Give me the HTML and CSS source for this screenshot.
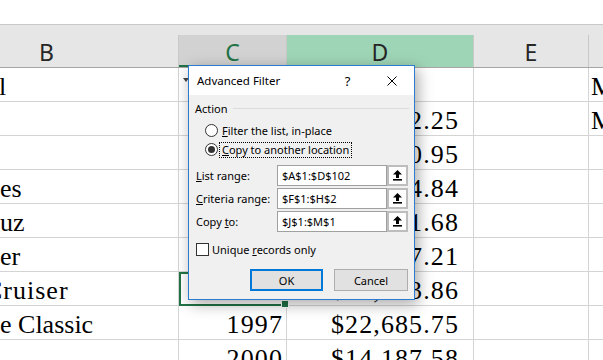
FILE: index.html
```html
<!DOCTYPE html>
<html lang="en">
<head>
    <meta charset="UTF-8">
    <meta name="viewport" content="width=device-width, initial-scale=1.0">
    <title>Advanced Filter</title>
    <link rel="stylesheet" href="styles.css">
</head>
<body>
    <div class="sheet">
        <div class="top-gap"></div>

        <div class="col-headers">
            <div class="hcell col-b">B</div>
            <div class="hcell col-c active">C</div>
            <div class="hcell col-d range">D</div>
            <div class="hcell col-e">E</div>
            <div class="hcell col-f"></div>
        </div>

        <div class="grid">
            <div class="row">
                <div class="cell col-b"><span class="frag-l">l</span></div>
                <div class="cell col-c"><span class="filter-arrow"></span></div>
                <div class="cell col-d num"></div>
                <div class="cell col-e"></div>
                <div class="cell col-f">M</div>
            </div>
            <div class="row">
                <div class="cell col-b"></div>
                <div class="cell col-c num"></div>
                <div class="cell col-d num">$12,342.25</div>
                <div class="cell col-e"></div>
                <div class="cell col-f">M</div>
            </div>
            <div class="row">
                <div class="cell col-b"></div>
                <div class="cell col-c num"></div>
                <div class="cell col-d num">$10,290.95</div>
                <div class="cell col-e"></div>
                <div class="cell col-f"></div>
            </div>
            <div class="row">
                <div class="cell col-b">es</div>
                <div class="cell col-c num"></div>
                <div class="cell col-d num">$11,564.84</div>
                <div class="cell col-e"></div>
                <div class="cell col-f"></div>
            </div>
            <div class="row">
                <div class="cell col-b">uz</div>
                <div class="cell col-c num"></div>
                <div class="cell col-d num">$18,211.68</div>
                <div class="cell col-e"></div>
                <div class="cell col-f"></div>
            </div>
            <div class="row">
                <div class="cell col-b">er</div>
                <div class="cell col-c num"></div>
                <div class="cell col-d num">$15,437.21</div>
                <div class="cell col-e"></div>
                <div class="cell col-f"></div>
            </div>
            <div class="row">
                <div class="cell col-b"><span class="frag-cut">Cruiser</span></div>
                <div class="cell col-c num selected"></div>
                <div class="cell col-d num">$17,633.86</div>
                <div class="cell col-e"></div>
                <div class="cell col-f"></div>
            </div>
            <div class="row">
                <div class="cell col-b">e Classic</div>
                <div class="cell col-c num">1997</div>
                <div class="cell col-d num">$22,685.75</div>
                <div class="cell col-e"></div>
                <div class="cell col-f"></div>
            </div>
            <div class="row">
                <div class="cell col-b"></div>
                <div class="cell col-c num">2000</div>
                <div class="cell col-d num">$14,187.58</div>
                <div class="cell col-e"></div>
                <div class="cell col-f"></div>
            </div>
        </div>
    </div>

    <div class="dialog">
        <div class="dialog-title">
            <span class="title-text">Advanced Filter</span>
            <span class="title-btn help">?</span>
            <span class="title-btn close">
                <svg width="10" height="10" viewBox="0 0 10 10">
                    <path d="M0.5 0.5 L9.5 9.5 M9.5 0.5 L0.5 9.5" stroke="#000" stroke-width="1" fill="none"/>
                </svg>
            </span>
        </div>

        <div class="dialog-body">
            <div class="group-legend">
                <span>Action</span>
                <div class="group-line"></div>
            </div>

            <div class="radio-list">
                <div class="radio-row">
                    <span class="radio"></span>
                    <span class="radio-label"><u>F</u>ilter the list, in-place</span>
                </div>
                <div class="radio-row">
                    <span class="radio checked"></span>
                    <span class="radio-label focused"><u>C</u>opy to another location</span>
                </div>
            </div>

            <div class="fields">
                <div class="field">
                    <label><u>L</u>ist range:</label>
                    <div class="ref-input">$A$1:$D$102</div>
                    <div class="ref-btn">
                        <svg width="9" height="11" viewBox="0 0 9 11">
                            <polygon points="4.5,0 9,4.5 6,4.5 6,8 3,8 3,4.5 0,4.5" fill="#000"/>
                            <rect x="0" y="9" width="9" height="1.6" fill="#000"/>
                        </svg>
                    </div>
                </div>
                <div class="field">
                    <label><u>C</u>riteria range:</label>
                    <div class="ref-input">$F$1:$H$2</div>
                    <div class="ref-btn">
                        <svg width="9" height="11" viewBox="0 0 9 11">
                            <polygon points="4.5,0 9,4.5 6,4.5 6,8 3,8 3,4.5 0,4.5" fill="#000"/>
                            <rect x="0" y="9" width="9" height="1.6" fill="#000"/>
                        </svg>
                    </div>
                </div>
                <div class="field">
                    <label>Copy <u>t</u>o:</label>
                    <div class="ref-input">$J$1:$M$1</div>
                    <div class="ref-btn">
                        <svg width="9" height="11" viewBox="0 0 9 11">
                            <polygon points="4.5,0 9,4.5 6,4.5 6,8 3,8 3,4.5 0,4.5" fill="#000"/>
                            <rect x="0" y="9" width="9" height="1.6" fill="#000"/>
                        </svg>
                    </div>
                </div>
            </div>

            <div class="check-row">
                <span class="checkbox"></span>
                <span>Unique <u>r</u>ecords only</span>
            </div>

            <div class="dialog-buttons">
                <button class="btn btn-ok">OK</button>
                <button class="btn btn-cancel">Cancel</button>
            </div>
        </div>
    </div>
</body>
</html>
```

FILE: styles.css
```css
* {
    box-sizing: border-box;
}

body {
    margin: 0;
    width: 603px;
    height: 360px;
    overflow: hidden;
    background-color: #ffffff;
    font-family: "Liberation Serif", serif;
    color: #000000;
    position: relative;
}

.sheet {
    width: 603px;
}

.top-gap {
    height: 24px;
}

/* column letters */
.col-headers {
    display: flex;
    align-items: flex-end;
    height: 44px;
    background-color: #e6e6e6;
    border-top: 1px solid #c8c8c8;
    border-bottom: 1px solid #a6a6a6;
    font-family: "Noto Sans", sans-serif;
    font-size: 23px;
    color: #262626;
}

.hcell {
    flex: none;
    height: 32px;
    line-height: 32px;
    padding-top: 1px;
    text-align: center;
    border-right: 1px solid #c8c8c8;
}

.hcell.active {
    background-color: #d2d2d2;
    color: #217346;
    box-shadow: inset 0 -2px 0 #217346;
}

.hcell.range {
    background-color: #9fd5b7;
}

.col-b {
    width: 264px;
    margin-left: -85px;
}

.col-c {
    width: 108px;
}

.col-d {
    width: 187px;
}

.col-e {
    width: 115px;
}

.col-f {
    flex: 1;
}

.hcell.col-f {
    border-right: none;
}

/* cells */
.row {
    display: flex;
    height: 34px;
    border-bottom: 1px solid #d4d4d4;
}

.cell {
    flex: none;
    border-right: 1px solid #d4d4d4;
    font-size: 26px;
    line-height: 29px;
    padding-top: 4px;
    white-space: nowrap;
    overflow: hidden;
}

.cell.col-b {
    padding-left: 85px;
}

.cell.col-f {
    padding-left: 2px;
    border-right: none;
}

.num {
    text-align: right;
    padding-right: 3px;
    letter-spacing: 1.1px;
}

.col-d.num {
    padding-right: 14px;
}

.frag-l {
    margin-left: -1px;
}

.frag-cut {
    margin-left: -15px;
    letter-spacing: 1px;
}

.filter-arrow {
    display: block;
    width: 0;
    height: 0;
    margin: 6px 0 0 4px;
    border-top: 4px solid #444444;
    border-left: 3px solid transparent;
    border-right: 3px solid transparent;
}

.cell.selected {
    position: relative;
    overflow: visible;
}

.cell.selected::after {
    content: "";
    position: absolute;
    left: 0;
    top: 0;
    right: -1px;
    bottom: -1px;
    border: 2px solid #217346;
    z-index: 2;
}

.cell.selected::before {
    content: "";
    position: absolute;
    right: -3px;
    bottom: -3px;
    width: 6px;
    height: 6px;
    background-color: #217346;
    border: 1px solid #ffffff;
    z-index: 3;
}

/* dialog */
.dialog {
    position: absolute;
    left: 188px;
    top: 65px;
    width: 227px;
    height: 235px;
    border: 1px solid #2b7bd3;
    background-color: #f0f0f0;
    box-shadow: 3px 4px 14px rgba(0,0,0,0.35);
    font-family: "Noto Sans", sans-serif;
    font-size: 11px;
    color: #000000;
    display: flex;
    flex-direction: column;
    z-index: 10;
}

.dialog-title {
    height: 29px;
    background-color: #ffffff;
    display: flex;
    align-items: center;
    padding-left: 8px;
    font-size: 11.5px;
}

.title-text {
    flex: 1;
}

.title-btn {
    width: 45px;
    height: 29px;
    display: flex;
    align-items: center;
    justify-content: center;
}

.help {
    font-size: 13px;
}

.close {
    width: 44px;
}

.dialog-body {
    flex: 1;
    padding: 6px 6px 0 6px;
}

.group-legend {
    display: flex;
    align-items: center;
    height: 14px;
}

.group-line {
    flex: 1;
    height: 1px;
    margin-left: 5px;
    margin-right: -1px;
    background-color: #dcdcdc;
}

.radio-list {
    margin-top: 6px;
    padding-left: 10px;
}

.radio-row {
    display: flex;
    align-items: center;
    height: 19px;
}

.radio {
    width: 13px;
    height: 13px;
    border: 1px solid #333333;
    border-radius: 50%;
    background-color: #ffffff;
    margin-right: 1px;
    display: flex;
    align-items: center;
    justify-content: center;
}

.radio.checked::after {
    content: "";
    width: 7px;
    height: 7px;
    border-radius: 50%;
    background-color: #333333;
}

.radio-label {
    padding: 0 2px;
    line-height: 14px;
    border: 1px dotted transparent;
}

.radio-label.focused {
    border-color: #000000;
}

.fields {
    margin-top: 6px;
    display: flex;
    flex-direction: column;
    gap: 2px;
}

.field {
    display: flex;
    align-items: center;
    height: 21px;
}

.field label {
    width: 82px;
    padding-left: 1px;
}

.ref-input {
    width: 110px;
    height: 21px;
    border: 1px solid #a0a0a0;
    background-color: #ffffff;
    padding-left: 4px;
    line-height: 19px;
}

.ref-btn {
    width: 21px;
    height: 21px;
    border: 2px solid #bdbdbd;
    background-color: #fdfdfd;
    display: flex;
    align-items: center;
    justify-content: center;
}

.check-row {
    margin-top: 11px;
    display: flex;
    align-items: center;
    height: 13px;
}

.checkbox {
    width: 13px;
    height: 13px;
    margin-left: 1px;
    margin-right: 3px;
    border: 1px solid #333333;
    background-color: #ffffff;
}

.dialog-buttons {
    margin-top: 13px;
    display: flex;
    justify-content: flex-end;
    gap: 11px;
}

.btn {
    height: 22px;
    padding: 0;
    font-family: inherit;
    font-size: 11px;
    color: #000000;
    background-color: #e1e1e1;
    border: 1px solid #adadad;
}

.btn-ok {
    width: 73px;
    border: 2px solid #0078d7;
}

.btn-cancel {
    width: 74px;
}
```
